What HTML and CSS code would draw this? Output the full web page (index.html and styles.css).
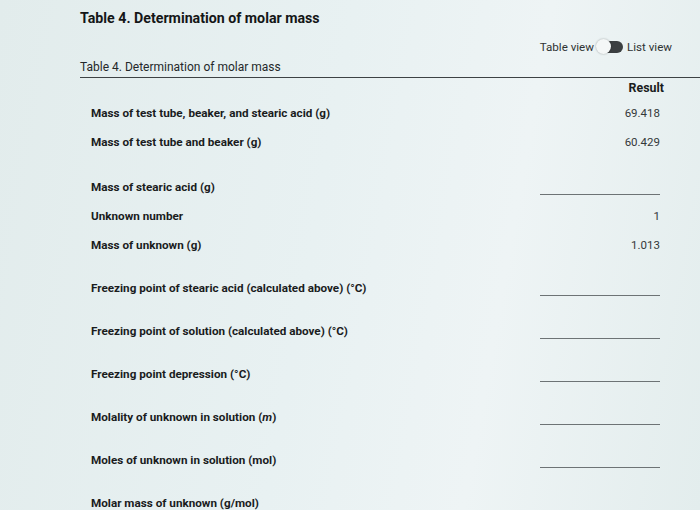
FILE: index.html
```html
<!DOCTYPE html>
<html lang="en">
<head>
<meta charset="utf-8">
<title>Table 4. Determination of molar mass</title>
<link rel="stylesheet" href="styles.css">
</head>
<body>
<main class="page">
  <h1 class="title">Table 4. Determination of molar mass</h1>
  <div class="view-toggle">
    <span class="view-toggle__label">Table view</span>
    <span class="switch"><span class="switch__knob"></span></span>
    <span class="view-toggle__label">List view</span>
  </div>
  <div class="caption">Table 4. Determination of molar mass</div>
  <div class="data-table">
    <div class="row row--head"><span class="label"></span><span class="value value--head">Result</span></div>
    <div class="row"><span class="label">Mass of test tube, beaker, and stearic acid (g)</span><span class="value">69.418</span></div>
    <div class="row"><span class="label">Mass of test tube and beaker (g)</span><span class="value">60.429</span></div>
    <div class="row row--input row--spaced"><span class="label">Mass of stearic acid (g)</span><span class="value"><span class="blank"></span></span></div>
    <div class="row"><span class="label">Unknown number</span><span class="value">1</span></div>
    <div class="row"><span class="label">Mass of unknown (g)</span><span class="value">1.013</span></div>
    <div class="row row--input"><span class="label">Freezing point of stearic acid (calculated above) (°C)</span><span class="value"><span class="blank"></span></span></div>
    <div class="row row--input"><span class="label">Freezing point of solution (calculated above) (°C)</span><span class="value"><span class="blank"></span></span></div>
    <div class="row row--input"><span class="label">Freezing point depression (°C)</span><span class="value"><span class="blank"></span></span></div>
    <div class="row row--input"><span class="label">Molality of unknown in solution (<i>m</i>)</span><span class="value"><span class="blank"></span></span></div>
    <div class="row row--input"><span class="label">Moles of unknown in solution (mol)</span><span class="value"><span class="blank"></span></span></div>
    <div class="row row--input"><span class="label">Molar mass of unknown (g/mol)</span><span class="value"><span class="blank"></span></span></div>
  </div>
</main>
</body>
</html>
```
FILE: styles.css
```css
html, body {
  margin: 0;
  padding: 0;
}
body {
  background: linear-gradient(100deg, #e2ecec 0%, #e8f1f2 45%, #eef4f5 70%, #e3eded 100%);
  font-family: Roboto, "Liberation Sans", sans-serif;
  color: #1b1d1e;
  height: 510px;
  overflow: hidden;
}
.page {
  padding: 8px 0 0 80px;
}
.title {
  margin: 0;
  font-size: 14.2px;
  line-height: 20px;
  font-weight: 700;
  color: #141617;
}
.view-toggle {
  margin-top: 11px;
  height: 16px;
  display: flex;
  align-items: center;
  justify-content: flex-end;
  gap: 4px;
  padding-right: 28px;
  font-size: 11.6px;
  color: #2e3233;
}
.switch {
  position: relative;
  width: 25px;
  height: 12px;
  border-radius: 6px;
  background: #3b3f41;
}
.switch__knob {
  position: absolute;
  left: -2px;
  top: -2px;
  width: 15px;
  height: 15px;
  border-radius: 50%;
  background: #f4f7f7;
  box-shadow: 0 0 2px rgba(0,0,0,0.35);
}
.caption {
  margin-top: 4px;
  margin-bottom: 2px;
  font-size: 12px;
  line-height: 16px;
  color: #24282a;
}
.data-table {
  border-top: 1px solid #3d4244;
  padding-right: 40px;
}
.row {
  display: grid;
  grid-template-columns: 1fr 120px;
  align-items: end;
  height: 29px;
  padding-bottom: 6px;
  box-sizing: border-box;
}
.row--head {
  height: 20px;
  padding-bottom: 2px;
}
.row--input {
  height: 43px;
}
.row--spaced {
  height: 45px;
}
.label {
  padding-left: 11px;
  font-size: 11.7px;
  line-height: 16px;
  font-weight: 700;
  color: #1a1c1d;
}
.value {
  text-align: right;
  font-size: 11.5px;
  line-height: 16px;
  color: #33383a;
}
.value--head {
  font-weight: 700;
  font-size: 12.4px;
  color: #1a1c1d;
  margin-right: -4px;
}
.blank {
  display: block;
  height: 10px;
  border-bottom: 1px solid #6d7375;
}
```
